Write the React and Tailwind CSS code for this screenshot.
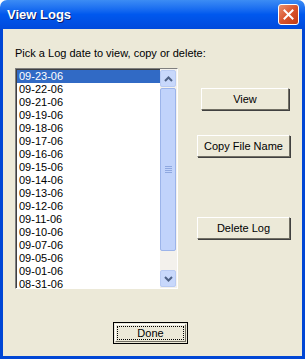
import React from "react";

const dates = [
  "09-23-06","09-22-06","09-21-06","09-19-06","09-18-06","09-17-06","09-16-06",
  "09-15-06","09-14-06","09-13-06","09-12-06","09-11-06","09-10-06","09-07-06",
  "09-05-06","09-01-06","08-31-06",
];

const F = { fontFamily: "Tahoma, 'Liberation Sans', Arial, sans-serif", fontSize: "11px" };

function Btn({ children, className = "" }) {
  return (
    <div className={`h-[22px] flex items-center justify-center bg-[#ECE9D8] border border-t-white border-l-white border-b-[#716F64] border-r-[#716F64] shadow-[1px_1px_0_#404040] ${className}`}>
      {children}
    </div>
  );
}

export default function App() {
  return (
    <div className="w-[305px] h-[359px] flex flex-col overflow-hidden" style={F}>
      <div className="h-[29px] rounded-t-[7px] bg-gradient-to-b from-[#3C8CF4] via-[#0058EE] to-[#004ADC] flex items-center justify-between pl-[7px] pr-[6px] shrink-0">
        <span className="text-white font-bold text-[13px]" style={{ fontFamily: "'Trebuchet MS', 'Liberation Sans', sans-serif", textShadow: "1px 1px 0 #0A1E6E" }}>View Logs</span>
        <div className="w-[21px] h-[21px] rounded-[3px] border border-white bg-gradient-to-br from-[#E9906E] via-[#D9532C] to-[#C13A14] flex items-center justify-center">
          <svg width="11" height="11" viewBox="0 0 11 11">
            <path d="M1.5 1.5 L9.5 9.5 M9.5 1.5 L1.5 9.5" stroke="white" strokeWidth="2" strokeLinecap="square" />
          </svg>
        </div>
      </div>
      <div className="flex-1 bg-[#0046D5] px-[3px] pb-[3px] flex">
        <div className="flex-1 bg-[#ECE9D8] flex flex-col text-black">
          <div className="pl-[12px] pt-[18px] leading-[13px]">Pick a Log date to view, copy or delete:</div>
          <div className="flex pl-[12px] mt-[8px]">
            <div className="w-[163px] h-[221px] border border-[#7F7F7F] border-r-white border-b-white flex bg-white shadow-[inset_1px_1px_0_#404040]">
              <div className="flex-1 pt-[1px] pl-[1px] overflow-hidden">
                {dates.map((d, i) => (
                  <div key={d} className={`h-[13px] leading-[13px] pl-[2px] ${i === 0 ? "bg-[#316AC5] text-white" : "text-black"}`}>{d}</div>
                ))}
              </div>
              <div className="w-[17px] flex flex-col bg-[#F3F1EC] pt-[1px] pb-[1px] pr-[1px]">
                <div className="h-[17px] rounded-[2px] border border-[#B9CBF3] bg-[#C8D8FB] flex items-center justify-center">
                  <svg width="9" height="6" viewBox="0 0 9 6"><path d="M1 5 L4.5 1.5 L8 5" stroke="#4D6185" strokeWidth="2" fill="none" /></svg>
                </div>
                <div className="h-[163px] mt-[1px] rounded-[2px] border border-[#9CB4EA] bg-[#C1D3FB] flex items-center justify-center">
                  <div className="flex flex-col gap-[1px]">
                    <div className="w-[7px] h-[1px] bg-[#8FA8E0]" />
                    <div className="w-[7px] h-[1px] bg-[#8FA8E0]" />
                    <div className="w-[7px] h-[1px] bg-[#8FA8E0]" />
                    <div className="w-[7px] h-[1px] bg-[#8FA8E0]" />
                  </div>
                </div>
                <div className="flex-1" />
                <div className="h-[17px] rounded-[2px] border border-[#B9CBF3] bg-[#C8D8FB] flex items-center justify-center">
                  <svg width="9" height="6" viewBox="0 0 9 6"><path d="M1 1 L4.5 4.5 L8 1" stroke="#4D6185" strokeWidth="2" fill="none" /></svg>
                </div>
              </div>
            </div>
            <div className="flex flex-col ml-[19px] pt-[20px]">
              <Btn className="w-[88px] ml-[4px]">View</Btn>
              <Btn className="w-[93px] mt-[25px]">Copy File Name</Btn>
              <Btn className="w-[93px] mt-[60px]">Delete Log</Btn>
            </div>
          </div>
          <div className="flex justify-center mt-[33px] pr-[4px]">
            <div className="w-[75px] h-[22px] border border-black p-[1px] bg-[#ECE9D8]">
              <div className="h-full border border-t-white border-l-white border-b-[#716F64] border-r-[#716F64] p-[1px]">
                <div className="h-full border border-dotted border-black flex items-center justify-center">Done</div>
              </div>
            </div>
          </div>
        </div>
      </div>
    </div>
  );
}
